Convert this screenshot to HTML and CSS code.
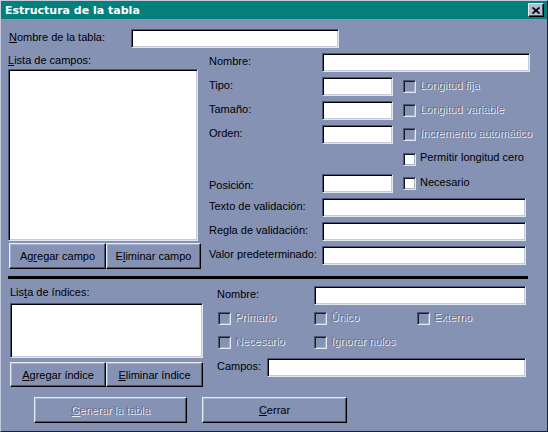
FILE: index.html
```html
<!DOCTYPE html>
<html lang="es">
<head>
<meta charset="utf-8">
<title>Estructura de la tabla</title>
<link rel="stylesheet" href="styles.css">
</head>
<body>
<div class="window">
  <div class="titlebar">
    <span class="title">Estructura de la tabla</span>
    <span class="close"><svg width="8" height="7" viewBox="0 0 8 7"><path d="M0.5 0.5L7.5 6.5M7.5 0.5L0.5 6.5" stroke="#000" stroke-width="1.7" fill="none"/></svg></span>
  </div>

  <div class="name-row">
    <span class="lbl table-lbl"><u>N</u>ombre de la tabla:</span>
    <span class="field w-table"></span>
  </div>

  <div class="section top">
    <div class="col-left top-left">
      <div class="caption cap-top"><u>L</u>ista de campos:</div>
      <div class="listbox lb-fields"></div>
      <div class="btn-pair top-pair">
        <button class="btn w97">Ag<u>r</u>egar campo</button><button class="btn w95">E<u>l</u>iminar campo</button>
      </div>
    </div>

    <div class="form-top">
      <span class="lbl">Nombre:</span><span class="field span2 w208"></span>
      <span class="lbl">Tipo:</span><span class="field short"></span><span class="chk dis"><i class="box"></i><span class="t">Longitud fija</span></span>
      <span class="lbl">Tamaño:</span><span class="field short"></span><span class="chk dis"><i class="box"></i><span class="t">Longitud variable</span></span>
      <span class="lbl">Orden:</span><span class="field short"></span><span class="chk dis"><i class="box"></i><span class="t">Incremento automático</span></span>
      <span class="chk col3"><i class="box on"></i><span class="t">Permitir longitud cero</span></span>
      <span class="lbl lower">Posición:</span><span class="field short"></span><span class="chk"><i class="box on"></i><span class="t">Necesario</span></span>
      <span class="lbl">Texto de validación:</span><span class="field span2 w204"></span>
      <span class="lbl">Regla de validación:</span><span class="field span2 w204"></span>
      <span class="lbl">Valor predeterminado:</span><span class="field span2 w204"></span>
    </div>
  </div>

  <div class="sep"></div>

  <div class="section bottom">
    <div class="col-left bottom-left">
      <div class="caption cap-bottom">Lis<u>t</u>a de índices:</div>
      <div class="listbox lb-index"></div>
      <div class="btn-pair bottom-pair">
        <button class="btn w96"><u>A</u>gregar índice</button><button class="btn w97"><u>E</u>liminar índice</button>
      </div>
    </div>

    <div class="form-bottom">
      <div class="frow">
        <span class="lbl l97">Nombre:</span><span class="field w212"></span>
      </div>
      <div class="chk-row r1">
        <span class="chk dis c96"><i class="box"></i><span class="t">Primario</span></span>
        <span class="chk dis c103"><i class="box"></i><span class="t">Único</span></span>
        <span class="chk dis"><i class="box"></i><span class="t">Externo</span></span>
      </div>
      <div class="chk-row r2">
        <span class="chk dis c96"><i class="box"></i><span class="t">Necesario</span></span>
        <span class="chk dis c103"><i class="box"></i><span class="t">Ignorar nulos</span></span>
      </div>
      <div class="frow campos">
        <span class="lbl l50">Campos:</span><span class="field w259"></span>
      </div>
    </div>
  </div>

  <div class="actions">
    <button class="btn big gen dis-text"><u>G</u>enerar la tabla</button>
    <button class="btn big close-btn"><u>C</u>errar</button>
  </div>
</div>
</body>
</html>
```

FILE: styles.css
```css
* { box-sizing: border-box; }

html, body {
  margin: 0;
  padding: 0;
}

body {
  background: #8592b4;
  font-family: "Liberation Sans", Arial, sans-serif;
  font-size: 11px;
  color: #000;
}

.window {
  width: 548px;
  height: 432px;
  overflow: hidden;
  background: #8592b4;
  border: 1px solid;
  border-color: #c3cbdd #1e2230 #1e2230 #c3cbdd;
  display: flex;
  flex-direction: column;
}

.titlebar {
  height: 18px;
  flex: none;
  background: #04807c;
  display: flex;
  align-items: center;
  padding-left: 4px;
}

.title {
  font-family: "DejaVu Sans", Verdana, sans-serif;
  font-weight: bold;
  font-size: 11px;
  color: #fff;
  padding-top: 1px;
}

.close {
  margin-left: auto;
  margin-right: 3px;
  width: 16px;
  height: 14px;
  background: #b4bccf;
  border: 1px solid;
  border-color: #f2f4f8 #000 #000 #f2f4f8;
  box-shadow: inset -1px -1px 0 #4b5571;
  display: flex;
  align-items: center;
  justify-content: center;
}

.close svg { display: block; }

u { text-decoration: underline; text-underline-offset: 1px; }

/* Controls */
.field {
  display: block;
  height: 19px;
  background: #fff;
  border: 1px solid;
  border-color: #4b5571 #e2e6ee #e2e6ee #4b5571;
  box-shadow: inset 1px 1px 0 #000, inset -1px -1px 0 #c4cad8;
}

.listbox {
  background: #fff;
  border: 1px solid;
  border-color: #4b5571 #e2e6ee #e2e6ee #4b5571;
  box-shadow: inset 1px 1px 0 #000, inset -1px -1px 0 #c4cad8;
}

.btn {
  display: block;
  background: #8592b4;
  border: 1px solid;
  border-color: #e8ecf4 #000 #000 #e8ecf4;
  box-shadow: inset -1px -1px 0 #4b5571, inset 1px 1px 0 #a3add0;
  font-family: inherit;
  font-size: 11px;
  color: #000;
  padding: 0;
  margin: 0;
  text-align: center;
}

.lbl {
  white-space: nowrap;
  padding-bottom: 4px;
}

.chk {
  display: flex;
  align-items: center;
  gap: 4px;
  white-space: nowrap;
  height: 13px;
}

.chk .t {
  padding-bottom: 4px;
}

.box {
  display: block;
  flex: none;
  width: 13px;
  height: 13px;
  border: 1px solid;
  border-color: #4b5571 #e2e6ee #e2e6ee #4b5571;
  box-shadow: inset 1px 1px 0 #1a1e2a, inset -1px -1px 0 #aab2c8;
  background: #8592b4;
}

.box.on { background: #fff; }

.dis, .dis-text {
  color: #65718f;
  text-shadow: 1px 1px 0 #eef1f7;
}

/* Name row */
.name-row {
  display: flex;
  align-items: center;
  margin-top: 10px;
  height: 19px;
}

.table-lbl {
  margin-left: 8px;
  width: 122px;
  padding-bottom: 3px;
}

.w-table { width: 208px; }

/* Sections */
.section {
  display: flex;
  align-items: flex-start;
}

.section.top { margin-top: 5px; }

.top-left {
  margin-left: 7px;
  width: 193px;
}

.caption {
  white-space: nowrap;
}

.cap-top { height: 16px; line-height: 14px; }

.lb-fields {
  width: 190px;
  height: 172px;
}

.btn-pair {
  display: flex;
}

.top-pair {
  margin-top: 2px;
  margin-left: 1px;
}

.top-pair .btn { height: 26px; }

.w95 { width: 95px; }
.w96 { width: 96px; }
.w97 { width: 97px; }

.form-top {
  margin-left: 8px;
  width: 320px;
  display: grid;
  grid-template-columns: 113px 81px auto;
  grid-template-rows: 19px 19px 19px 19px 20px 19px 19px 19px 19px;
  row-gap: 5px;
  align-items: center;
}

.span2 { grid-column: span 2; }
.col3 { grid-column: 3; }
.w208 { width: 208px; }
.w204 { width: 204px; }
.short { width: 71px; }
.lbl.lower { padding-top: 3px; padding-bottom: 0; }

/* Separator */
.sep {
  margin-top: 7px;
  margin-left: 7px;
  width: 520px;
  height: 3px;
  background: #000;
  flex: none;
}

.section.bottom { margin-top: 7px; }

.bottom-left {
  margin-left: 9px;
  width: 193px;
}

.cap-bottom { height: 17px; line-height: 13px; }

.lb-index {
  width: 193px;
  height: 55px;
}

.bottom-pair { margin-top: 4px; }
.bottom-pair .btn { height: 25px; }

.form-bottom {
  margin-left: 14px;
  display: flex;
  flex-direction: column;
}

.frow {
  display: flex;
  align-items: center;
  height: 19px;
}

.l97 { width: 97px; }
.l50 { width: 50px; }
.w212 { width: 212px; }
.w259 { width: 259px; }

.chk-row {
  display: flex;
  margin-left: 1px;
}

.chk-row.r1 { margin-top: 7px; }
.chk-row.r2 { margin-top: 11px; }
.frow.campos { margin-top: 9px; }

.c96 { width: 96px; }
.c103 { width: 103px; }

/* Bottom actions */
.actions {
  display: flex;
  margin-top: 10px;
  margin-left: 33px;
}

.btn.big { height: 26px; }
.gen { width: 153px; }
.close-btn { width: 145px; margin-left: 15px; }
```
